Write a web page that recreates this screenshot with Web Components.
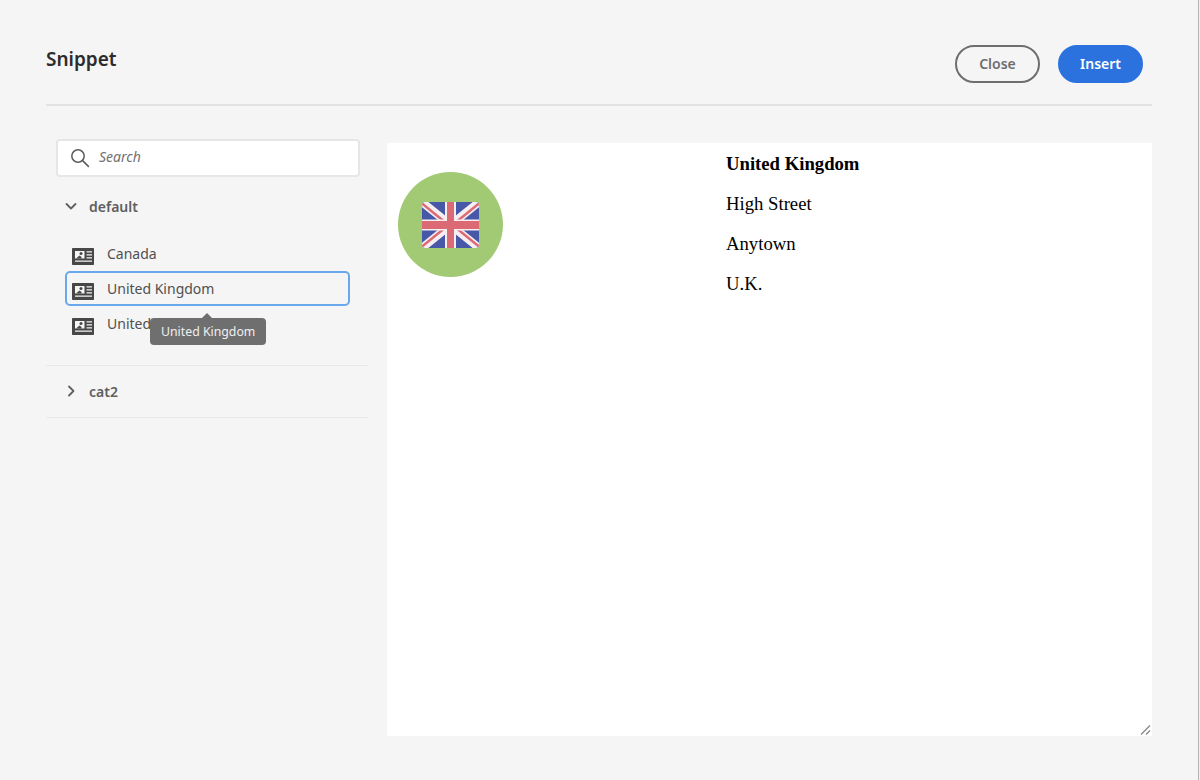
<!DOCTYPE html>
<html lang="en">
<head>
<meta charset="utf-8">
<title>Snippet</title>
<style>
  html, body { margin: 0; height: 100%; }
  body { background: #f5f5f5; font-family: "Noto Sans", sans-serif; overflow: hidden; }
</style>
</head>
<body>
<snippet-dialog>
  <span slot="title">Snippet</span>
  <pill-button slot="actions">Close</pill-button>
  <pill-button slot="actions" primary>Insert</pill-button>
  <snippet-search slot="side"></snippet-search>
  <snippet-group slot="side" label="default" open>
    <snippet-item>Canada</snippet-item>
    <snippet-item selected tip="United Kingdom">United Kingdom</snippet-item>
    <snippet-item>United States</snippet-item>
  </snippet-group>
  <snippet-group slot="side" label="cat2"></snippet-group>
  <snippet-preview slot="main">
    <p><b>United Kingdom</b></p>
    <p>High Street</p>
    <p>Anytown</p>
    <p>U.K.</p>
  </snippet-preview>
</snippet-dialog>

<script>
class SnippetDialog extends HTMLElement {
  constructor() {
    super();
    this.attachShadow({ mode: "open" });
  }

  connectedCallback() {
    this.shadowRoot.innerHTML = `
    <style>
      :host {
        display: block;
        box-sizing: border-box;
        width: 1200px;
        height: 780px;
        padding: 0 47px 44px 46px;
        border-right: 1px solid #f0f0f0;
        box-shadow: inset -1px 0 0 #b4b4b4;
      }
      header {
        display: flex;
        justify-content: space-between;
        box-sizing: border-box;
        height: 106px;
        padding: 45px 9px 0 0;
        border-bottom: 2px solid #e2e2e2;
      }
      h1 {
        margin: 0;
        font-size: 19px;
        line-height: 28px;
        font-weight: 600;
        color: #2c2c2c;
      }
      .actions { display: flex; gap: 18px; align-items: flex-start; }
      .body {
        display: flex;
        height: 593px;
        margin-top: 37px;
        gap: 19px;
      }
      .side { width: 322px; flex: none; margin-top: -4px; }
      .main { flex: 1; min-width: 0; }
    </style>
    <header>
      <h1><slot name="title"></slot></h1>
      <div class="actions"><slot name="actions"></slot></div>
    </header>
    <div class="body">
      <div class="side"><slot name="side"></slot></div>
      <div class="main"><slot name="main"></slot></div>
    </div>
    `;
  }
}

class PillButton extends HTMLElement {
  constructor() {
    super();
    this.attachShadow({ mode: "open" });
  }

  connectedCallback() {
    this.shadowRoot.innerHTML = `
    <style>
      :host {
        display: flex;
        align-items: center;
        justify-content: center;
        box-sizing: border-box;
        width: 85px;
        height: 38px;
        padding-bottom: 2px;
        border: 2px solid #6e6e6e;
        border-radius: 19px;
        font-size: 14px;
        font-weight: 600;
        color: #6e6e6e;
      }
      :host([primary]) {
        background: #2c72de;
        border-color: #2c72de;
        color: #fff;
      }
    </style>
    <slot></slot>
    `;
  }
}

class SnippetSearch extends HTMLElement {
  constructor() {
    super();
    this.attachShadow({ mode: "open" });
  }

  connectedCallback() {
    this.shadowRoot.innerHTML = `
    <style>
      :host {
        display: flex;
        align-items: center;
        box-sizing: border-box;
        width: 304px;
        height: 38px;
        margin-left: 10px;
        padding-left: 12px;
        gap: 9px;
        background: #fff;
        border: 2px solid #e6e6e6;
        border-radius: 4px;
        font-size: 14px;
        font-style: italic;
        color: #707070;
      }
      svg { width: 20px; height: 20px; flex: none; }
      span { margin-top: -3px; }
    </style>
    <svg viewBox="0 0 20 20" fill="none" stroke="#5c5c5c" stroke-width="1.5" stroke-linecap="round">
      <circle cx="8" cy="8" r="6.2"/>
      <path d="M12.6 12.6 18.4 18.4"/>
    </svg>
    <span>Search</span>
    `;
  }
}

class SnippetGroup extends HTMLElement {
  constructor() {
    super();
    this.attachShadow({ mode: "open" });
  }

  connectedCallback() {
    const open = this.hasAttribute("open");
    const chevron = open ? "M1.5 4 6 8.5 10.5 4" : "M4 1.5 8.5 6 4 10.5";
    this.shadowRoot.innerHTML = `
    <style>
      :host {
        display: block;
        margin-top: 4px;
        border-bottom: 1px solid #e8e8e8;
      }
      :host(:not([open])) { margin-top: 0; }
      .head {
        display: flex;
        align-items: center;
        height: 51px;
        padding-left: 19px;
        gap: 12px;
        font-size: 14px;
        font-weight: 600;
        color: #5f5f5f;
      }
      svg { width: 12px; height: 12px; flex: none; margin-top: -2px; }
      .items { padding: 4px 0 24px 19px; }
      .items[hidden] { display: none; }
    </style>
    <div class="head">
      <svg viewBox="0 0 12 12" fill="none" stroke="#5f5f5f" stroke-width="1.8" stroke-linecap="round" stroke-linejoin="round"><path d="${chevron}"/></svg>
      <span>${this.getAttribute("label")}</span>
    </div>
    <div class="items" ${open ? "" : "hidden"}><slot></slot></div>
    `;
  }
}

class SnippetItem extends HTMLElement {
  constructor() {
    super();
    this.attachShadow({ mode: "open" });
  }

  connectedCallback() {
    const tip = this.getAttribute("tip");
    this.shadowRoot.innerHTML = `
    <style>
      :host {
        display: flex;
        align-items: center;
        position: relative;
        box-sizing: border-box;
        width: 285px;
        height: 35px;
        padding-left: 5px;
        gap: 13px;
        border: 2px solid transparent;
        border-radius: 5px;
        font-size: 14px;
        color: #505050;
        white-space: nowrap;
      }
      :host([selected]) { border-color: #6aa8ee; }
      svg { width: 22px; height: 17px; flex: none; margin-top: 6px; }
      .tip {
        position: absolute;
        left: 83px;
        top: 45px;
        z-index: 2;
        display: flex;
        align-items: center;
        height: 27px;
        padding: 0 11px;
        background: #6f6f6f;
        border-radius: 4px;
        font-size: 12.3px;
        color: #f0f0f0;
      }
      .tip::before {
        content: "";
        position: absolute;
        left: 52px;
        top: -5px;
        border: 5px solid transparent;
        border-top: 0;
        border-bottom-color: #6f6f6f;
      }
    </style>
    <svg viewBox="0 0 22 17">
      <path fill="#474747" fill-rule="evenodd" d="M0 1c0-.6.4-1 1-1h20c.6 0 1 .4 1 1v15c0 .6-.4 1-1 1H1c-.6 0-1-.4-1-1ZM3 3v7.500h9.500V3ZM14.500 3.200v1.300H20V3.200Zm0 3v1.300H20V6.200Zm0 3v1.300H20V9.200ZM3 12.500v1.300h17v-1.300Z"/>
      <path fill="#474747" d="M4 10.500 7.500 7.500 9.500 9v1.500Z"/>
      <circle cx="9" cy="5.500" r="1.500" fill="#474747"/>
    </svg>
    <span><slot></slot></span>
    ${tip ? `<div class="tip">${tip}</div>` : ""}
    `;
  }
}

class SnippetPreview extends HTMLElement {
  constructor() {
    super();
    this.attachShadow({ mode: "open" });
  }

  connectedCallback() {
    this.shadowRoot.innerHTML = `
    <style>
      :host {
        display: grid;
        grid-template-columns: 339px 1fr;
        position: relative;
        box-sizing: border-box;
        height: 593px;
        background: #fff;
        font-family: "Liberation Serif", serif;
        font-size: 18.7px;
        color: #000;
      }
      .badge {
        display: flex;
        align-items: center;
        justify-content: center;
        width: 105px;
        height: 105px;
        margin: 29px 0 0 11px;
        background: #a2c974;
        border-radius: 50%;
      }
      ::slotted(p) { margin: 0 0 20px; line-height: 20px; }
      .text { padding-top: 11px; }
      .grip { position: absolute; right: 0; bottom: 0; width: 12px; height: 12px; }
    </style>
    <div class="badge">
      <svg width="57" height="46" viewBox="0 0 57 46">
        <clipPath id="r"><rect width="57" height="46" rx="3"/></clipPath>
        <g clip-path="url(#r)">
          <rect width="57" height="46" fill="#4758a8"/>
          <path d="M0 0 57 46M57 0 0 46" stroke="#f6eef0" stroke-width="8"/>
          <path d="M0 1.500 24 21M57 1.500 33 21M0 44.500 24 25M57 44.500 33 25" stroke="#dc6a74" stroke-width="2.500"/>
          <path d="M28.500 0V46M0 23H57" stroke="#f6eef0" stroke-width="11"/>
          <path d="M28.500 0V46" stroke="#dc6a74" stroke-width="7"/>
          <path d="M0 23H57" stroke="#dc6a74" stroke-width="8"/>
        </g>
      </svg>
    </div>
    <div class="text"><slot></slot></div>
    <svg class="grip" viewBox="0 0 12 12" stroke="#8a8a8a" stroke-width="1.400" fill="none">
      <path d="M1 10.500 10 1.500M6 10.500 10 6.500"/>
    </svg>
    `;
  }
}

customElements.define("snippet-dialog", SnippetDialog);
customElements.define("pill-button", PillButton);
customElements.define("snippet-search", SnippetSearch);
customElements.define("snippet-group", SnippetGroup);
customElements.define("snippet-item", SnippetItem);
customElements.define("snippet-preview", SnippetPreview);
</script>
</body>
</html>
